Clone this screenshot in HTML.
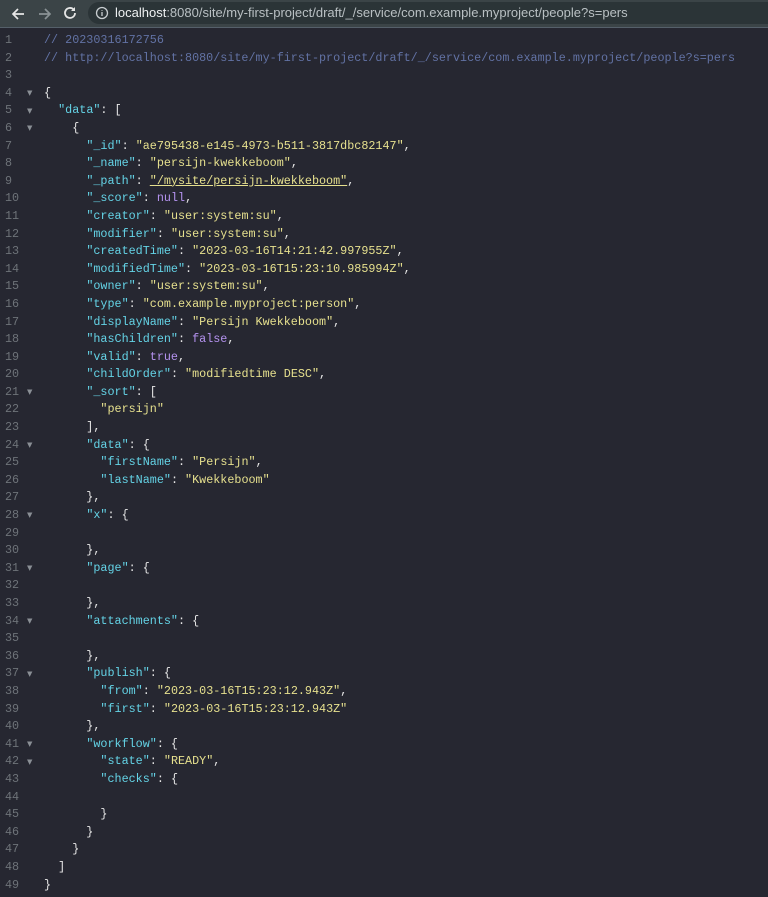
<!DOCTYPE html>
<html><head><style>
*{margin:0;padding:0;box-sizing:border-box}
body{width:768px;height:897px;background:#262731;overflow:hidden;font-family:"Liberation Mono",monospace}
.bar{height:28px;background:#3b4447;border-bottom:1px solid #55606a;position:relative}
.pill{position:absolute;left:88px;top:2px;right:0;height:22px;background:#2b3437;border-radius:11px 0 0 11px;font-family:"Liberation Sans",sans-serif;font-size:13px;color:#b9c0c3;line-height:22px;padding-left:27px}
.pill b{font-weight:normal;color:#eef1f2}
.code{position:absolute;top:32px;left:0;font-size:11.75px;line-height:17.6px;white-space:pre;color:#e6e6e6}
.ln{display:inline-block;width:44px;color:#6e7379;padding-left:5px}
.ar{position:absolute;left:27px;color:#8a8f95;font-size:7px}
.c{color:#6272a4}.k{color:#64d3e6}.s{color:#e6e08e}.n{color:#b593f0}.u{color:#e6e08e;text-decoration:underline}
</style></head><body>
<div class="bar">
<svg style="position:absolute;left:10px;top:6px" width="16" height="16" viewBox="0 0 16 16"><path d="M14 8H3M8 3L3 8l5 5" stroke="#e6e6e6" stroke-width="1.7" fill="none"/></svg>
<svg style="position:absolute;left:37px;top:6px" width="16" height="16" viewBox="0 0 16 16"><path d="M2 8h11M8 3l5 5-5 5" stroke="#8a9295" stroke-width="1.7" fill="none"/></svg>
<svg style="position:absolute;left:62px;top:5px" width="16" height="16" viewBox="0 0 16 16"><path d="M13 8a5 5 0 1 1-1.5-3.6" stroke="#e6e6e6" stroke-width="1.8" fill="none"/><path d="M13 2v4h-4z" fill="#e6e6e6"/></svg>
<div class="pill"><svg style="position:absolute;left:7px;top:4px" width="14" height="14" viewBox="0 0 14 14"><circle cx="7" cy="7" r="5.5" stroke="#c8cdd0" stroke-width="1.3" fill="none"/><path d="M7 6v4M7 4v.8" stroke="#c8cdd0" stroke-width="1.3"/></svg><b>localhost</b>:8080/site/my-first-project/draft/_/service/com.example.myproject/people?s=pers</div>
</div>
<div class="code"><span class="ln">1</span><span class="c">// 20230316172756</span>
<span class="ln">2</span><span class="c">// http://localhost:8080/site/my-first-project/draft/_/service/com.example.myproject/people?s=pers</span>
<span class="ln">3</span>
<span class="ln">4</span>{
<span class="ln">5</span>  <span class="k">"data"</span>: [
<span class="ln">6</span>    {
<span class="ln">7</span>      <span class="k">"_id"</span>: <span class="s">"ae795438-e145-4973-b511-3817dbc82147"</span>,
<span class="ln">8</span>      <span class="k">"_name"</span>: <span class="s">"persijn-kwekkeboom"</span>,
<span class="ln">9</span>      <span class="k">"_path"</span>: <span class="u">"/mysite/persijn-kwekkeboom"</span>,
<span class="ln">10</span>      <span class="k">"_score"</span>: <span class="n">null</span>,
<span class="ln">11</span>      <span class="k">"creator"</span>: <span class="s">"user:system:su"</span>,
<span class="ln">12</span>      <span class="k">"modifier"</span>: <span class="s">"user:system:su"</span>,
<span class="ln">13</span>      <span class="k">"createdTime"</span>: <span class="s">"2023-03-16T14:21:42.997955Z"</span>,
<span class="ln">14</span>      <span class="k">"modifiedTime"</span>: <span class="s">"2023-03-16T15:23:10.985994Z"</span>,
<span class="ln">15</span>      <span class="k">"owner"</span>: <span class="s">"user:system:su"</span>,
<span class="ln">16</span>      <span class="k">"type"</span>: <span class="s">"com.example.myproject:person"</span>,
<span class="ln">17</span>      <span class="k">"displayName"</span>: <span class="s">"Persijn Kwekkeboom"</span>,
<span class="ln">18</span>      <span class="k">"hasChildren"</span>: <span class="n">false</span>,
<span class="ln">19</span>      <span class="k">"valid"</span>: <span class="n">true</span>,
<span class="ln">20</span>      <span class="k">"childOrder"</span>: <span class="s">"modifiedtime DESC"</span>,
<span class="ln">21</span>      <span class="k">"_sort"</span>: [
<span class="ln">22</span>        <span class="s">"persijn"</span>
<span class="ln">23</span>      ],
<span class="ln">24</span>      <span class="k">"data"</span>: {
<span class="ln">25</span>        <span class="k">"firstName"</span>: <span class="s">"Persijn"</span>,
<span class="ln">26</span>        <span class="k">"lastName"</span>: <span class="s">"Kwekkeboom"</span>
<span class="ln">27</span>      },
<span class="ln">28</span>      <span class="k">"x"</span>: {
<span class="ln">29</span>
<span class="ln">30</span>      },
<span class="ln">31</span>      <span class="k">"page"</span>: {
<span class="ln">32</span>
<span class="ln">33</span>      },
<span class="ln">34</span>      <span class="k">"attachments"</span>: {
<span class="ln">35</span>
<span class="ln">36</span>      },
<span class="ln">37</span>      <span class="k">"publish"</span>: {
<span class="ln">38</span>        <span class="k">"from"</span>: <span class="s">"2023-03-16T15:23:12.943Z"</span>,
<span class="ln">39</span>        <span class="k">"first"</span>: <span class="s">"2023-03-16T15:23:12.943Z"</span>
<span class="ln">40</span>      },
<span class="ln">41</span>      <span class="k">"workflow"</span>: {
<span class="ln">42</span>        <span class="k">"state"</span>: <span class="s">"READY"</span>,
<span class="ln">43</span>        <span class="k">"checks"</span>: {
<span class="ln">44</span>
<span class="ln">45</span>        }
<span class="ln">46</span>      }
<span class="ln">47</span>    }
<span class="ln">48</span>  ]
<span class="ln">49</span>}</div>
<div style="position:absolute;top:33px;left:0;color:#8a8f95;font-family:'DejaVu Sans',sans-serif">
<span class="ar" style="top:56px">▼</span><span class="ar" style="top:74px">▼</span><span class="ar" style="top:91px">▼</span>
<span class="ar" style="top:355px">▼</span><span class="ar" style="top:408px">▼</span><span class="ar" style="top:478px">▼</span>
<span class="ar" style="top:531px">▼</span><span class="ar" style="top:584px">▼</span><span class="ar" style="top:637px">▼</span>
<span class="ar" style="top:707px">▼</span><span class="ar" style="top:725px">▼</span>
</div>
</body></html>
